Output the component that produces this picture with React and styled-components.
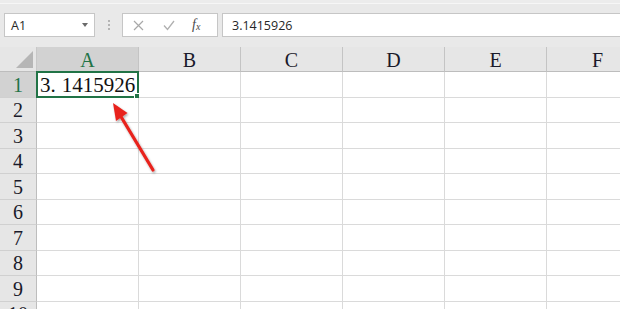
import React from "react";
import styled, { createGlobalStyle } from "styled-components";

const Global = createGlobalStyle`
  html, body { margin: 0; padding: 0; background: #ffffff; overflow: hidden; }
  * { box-sizing: border-box; }
`;

const Page = styled.div`
  position: relative;
  width: 620px;
  height: 309px;
  overflow: hidden;
  background: #ffffff;
`;

const TopStrip = styled.div`
  height: 4px;
  background: #ececec;
  border-bottom: 1px solid #f6f6f6;
`;

const FormulaBar = styled.div`
  height: 43px;
  background: #e9e9e9;
  display: flex;
  align-items: flex-start;
  padding: 9px 0 0 4px;
`;

const NameBox = styled.div`
  width: 91px;
  height: 24px;
  background: #fff;
  border: 1px solid #c6c6c6;
  display: flex;
  align-items: center;
  justify-content: space-between;
  padding: 0 6px 0 6px;
  font-family: "Open Sans", "Liberation Sans", sans-serif;
  font-size: 12.5px;
  color: #262626;
`;

const Caret = styled.span`
  width: 0;
  height: 0;
  border-left: 3.5px solid transparent;
  border-right: 3.5px solid transparent;
  border-top: 4px solid #6a6a6a;
`;

const Dots = styled.div`
  width: 27px;
  height: 24px;
  display: flex;
  flex-direction: column;
  align-items: center;
  justify-content: center;
  gap: 2px;
  & > span {
    width: 2px;
    height: 2px;
    background: #b4b4b4;
  }
`;

const ButtonBox = styled.div`
  width: 96px;
  height: 24px;
  background: #fff;
  border: 1px solid #c6c6c6;
  display: flex;
  align-items: center;
  padding-left: 10px;
  gap: 19px;
`;

const Fx = styled.span`
  font-family: "Liberation Serif", serif;
  font-style: italic;
  font-size: 14px;
  color: #4a4a4a;
  margin-left: -2px;
  & sub { font-size: 10px; vertical-align: -1px; }
`;

const FormulaInput = styled.div`
  flex: 1;
  height: 24px;
  margin-left: 4px;
  background: #fff;
  border: 1px solid #c6c6c6;
  border-right: none;
  display: flex;
  align-items: center;
  padding-left: 9px;
  font-family: "Open Sans", "Liberation Sans", sans-serif;
  font-size: 12.5px;
  color: #262626;
`;

const Grid = styled.div`
  display: grid;
  grid-template-columns: 37px repeat(6, 102px);
  grid-template-rows: 25px repeat(10, 25.5px);
`;

const Corner = styled.div`
  background: #e6e6e6;
  border-right: 1px solid #c8c8c8;
  border-bottom: 1px solid #bdbdbd;
  position: relative;
  &::after {
    content: "";
    position: absolute;
    right: 3px;
    bottom: 3px;
    width: 0;
    height: 0;
    border-left: 17px solid transparent;
    border-bottom: 17px solid #b6b6b6;
  }
`;

const ColHead = styled.div`
  background: ${(p) => (p.$sel ? "#d2d2d2" : "#e6e6e6")};
  color: ${(p) => (p.$sel ? "#217346" : "#1a1a2a")};
  border-right: 1px solid #c4c4c4;
  border-bottom: 1px solid #bdbdbd;
  display: flex;
  align-items: center;
  justify-content: center;
  padding-top: 3px;
  font-family: "Liberation Serif", serif;
  font-size: 20px;
`;

const RowHead = styled.div`
  background: ${(p) => (p.$sel ? "#d2d2d2" : "#e6e6e6")};
  color: ${(p) => (p.$sel ? "#217346" : "#1a1a2a")};
  border-right: 1px solid #bdbdbd;
  border-bottom: 1px solid #d0d0d0;
  display: flex;
  align-items: center;
  justify-content: center;
  padding-top: 2px;
  font-family: "Liberation Serif", serif;
  font-size: 20px;
`;

const Cell = styled.div`
  position: relative;
  background: #fff;
  border-right: 1px solid #dadada;
  border-bottom: 1px solid #dadada;
  display: flex;
  align-items: center;
  padding: 2px 0 0 3px;
  font-family: "Liberation Serif", serif;
  font-size: 21px;
  color: #111;
  white-space: nowrap;
  ${(p) =>
    p.$sel &&
    `
    &::before {
      content: "";
      position: absolute;
      left: -1px;
      top: -1px;
      right: -1px;
      bottom: -1px;
      border: 2px solid #217346;
      pointer-events: none;
    }
    &::after {
      content: "";
      position: absolute;
      right: -4px;
      bottom: -4px;
      width: 6px;
      height: 6px;
      background: #217346;
      border: 1px solid #fff;
    }
  `}
`;

const Dot = styled.span`
  margin-right: 6px;
`;

const Arrow = styled.svg`
  position: absolute;
  left: 0;
  top: 0;
  pointer-events: none;
`;

const cols = ["A", "B", "C", "D", "E", "F"];
const rows = [1, 2, 3, 4, 5, 6, 7, 8, 9, 10];

export default function App() {
  return (
    <Page>
      <Global />
      <TopStrip />
      <FormulaBar>
        <NameBox>
          <span>A1</span>
          <Caret />
        </NameBox>
        <Dots>
          <span />
          <span />
          <span />
        </Dots>
        <ButtonBox>
          <svg width="11" height="11" viewBox="0 0 11 11">
            <path d="M1 1 L10 10 M10 1 L1 10" stroke="#a8a8a8" strokeWidth="1.2" fill="none" />
          </svg>
          <svg width="12" height="11" viewBox="0 0 12 11">
            <path d="M1 5.5 L4.5 9.5 L11 1" stroke="#b0b0b0" strokeWidth="1.3" fill="none" />
          </svg>
          <Fx>
            f<sub>x</sub>
          </Fx>
        </ButtonBox>
        <FormulaInput>3.1415926</FormulaInput>
      </FormulaBar>
      <Grid>
        <Corner />
        {cols.map((c) => (
          <ColHead key={c} $sel={c === "A"}>
            {c}
          </ColHead>
        ))}
        {rows.map((r) => (
          <React.Fragment key={r}>
            <RowHead $sel={r === 1}>{r}</RowHead>
            {cols.map((c) => (
              <Cell key={c} $sel={r === 1 && c === "A"}>
                {r === 1 && c === "A" ? (
                  <>
                    3<Dot>.</Dot>1415926
                  </>
                ) : null}
              </Cell>
            ))}
          </React.Fragment>
        ))}
      </Grid>
      <Arrow width="620" height="309" viewBox="0 0 620 309">
        <defs>
          <filter id="sh" x="-20%" y="-20%" width="140%" height="140%">
            <feDropShadow dx="1" dy="1.5" stdDeviation="1.2" floodColor="#000" floodOpacity="0.35" />
          </filter>
        </defs>
        <g filter="url(#sh)">
          <line x1="153" y1="170" x2="120" y2="115" stroke="#e8211b" strokeWidth="3.2" strokeLinecap="round" />
          <polygon points="113,103 127.5,113 116,121" fill="#e8211b" />
        </g>
      </Arrow>
    </Page>
  );
}
